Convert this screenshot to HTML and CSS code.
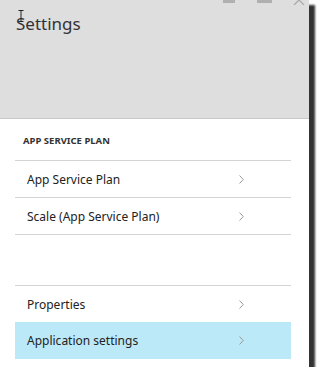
FILE: index.html
```html
<!DOCTYPE html>
<html lang="en">
<head>
  <meta charset="UTF-8">
  <title>Settings</title>
  <link rel="stylesheet" href="styles.css">
</head>
<body>
  <div class="blade">
    <div class="blade-header">
      <div class="win-controls">
        <span class="ctl ctl-min"></span>
        <span class="ctl ctl-max"></span>
        <svg class="ctl-close" width="12" height="5" viewBox="0 0 12 5">
          <path d="M1 -5L11 5M11 -5L1 5" stroke="#a8a8a8" stroke-width="1.2" fill="none"/>
        </svg>
      </div>
      <h1>Settings</h1>
      <svg class="cursor" width="6" height="12" viewBox="0 0 6 12">
        <path d="M0.5 0.5h5M3 0.5v11M0.5 11.5h5" stroke="#222" stroke-width="1" fill="none"/>
      </svg>
    </div>
    <div class="blade-content">
      <div class="section-title">APP SERVICE PLAN</div>
      <ul class="menu">
        <li>App Service Plan <svg class="chev" width="5" height="9" viewBox="0 0 5 9"><path d="M0.5 0.5L4.3 4.5L0.5 8.5" stroke="#9a9a9a" fill="none"/></svg></li>
        <li>Scale (App Service Plan) <svg class="chev" width="5" height="9" viewBox="0 0 5 9"><path d="M0.5 0.5L4.3 4.5L0.5 8.5" stroke="#9a9a9a" fill="none"/></svg></li>
      </ul>
      <div class="spacer"></div>
      <ul class="menu">
        <li>Properties <svg class="chev" width="5" height="9" viewBox="0 0 5 9"><path d="M0.5 0.5L4.3 4.5L0.5 8.5" stroke="#9a9a9a" fill="none"/></svg></li>
        <li class="selected">Application settings <svg class="chev" width="5" height="9" viewBox="0 0 5 9"><path d="M0.5 0.5L4.3 4.5L0.5 8.5" stroke="#9a9a9a" fill="none"/></svg></li>
      </ul>
    </div>
  </div>
</body>
</html>
```

FILE: styles.css
```css
body {
  margin: 0;
  background: #fff;
  font-family: "Noto Sans", "Open Sans", sans-serif;
  color: #222;
}
.blade {
  width: 309px;
  height: 367px;
  background: #fff;
  box-shadow: 6px 5px 2px rgba(0,0,0,0.8);
  display: flex;
  flex-direction: column;
}
.blade-header {
  position: relative;
  height: 118px;
  background: #dedede;
  border-bottom: 1px solid #c9c9c9;
}
.blade-header h1 {
  margin: 0;
  padding: 12px 0 0 16px;
  font-size: 17px;
  font-weight: normal;
  color: #333;
}
.cursor {
  position: absolute;
  left: 18px;
  top: 10px;
}
.win-controls {
  position: absolute;
  top: 0;
  left: 223px;
  display: flex;
  align-items: flex-start;
}
.ctl {
  display: block;
  height: 3px;
  background: #b0b0b0;
}
.ctl-min {
  width: 12px;
}
.ctl-max {
  width: 15px;
  margin-left: 22px;
}
.ctl-close {
  display: block;
  margin-left: 21px;
}
.blade-content {
  padding: 0 18px 0 15px;
}
.section-title {
  height: 41px;
  line-height: 44px;
  padding-left: 8px;
  font-size: 9.5px;
  font-weight: bold;
  color: #333;
}
.menu {
  list-style: none;
  margin: 0;
  padding: 0;
}
.menu li {
  display: flex;
  justify-content: space-between;
  align-items: center;
  height: 36px;
  padding: 0 47px 0 12px;
  border-top: 1px solid #d4d4d4;
  font-size: 12px;
}
.menu:first-of-type li:last-child {
  border-bottom: 1px solid #d4d4d4;
}
.menu li.selected {
  height: 37px;
  border-top: none;
  background: #bce9f8;
}
.chev {
  display: block;
}
.spacer {
  height: 50px;
}
```
